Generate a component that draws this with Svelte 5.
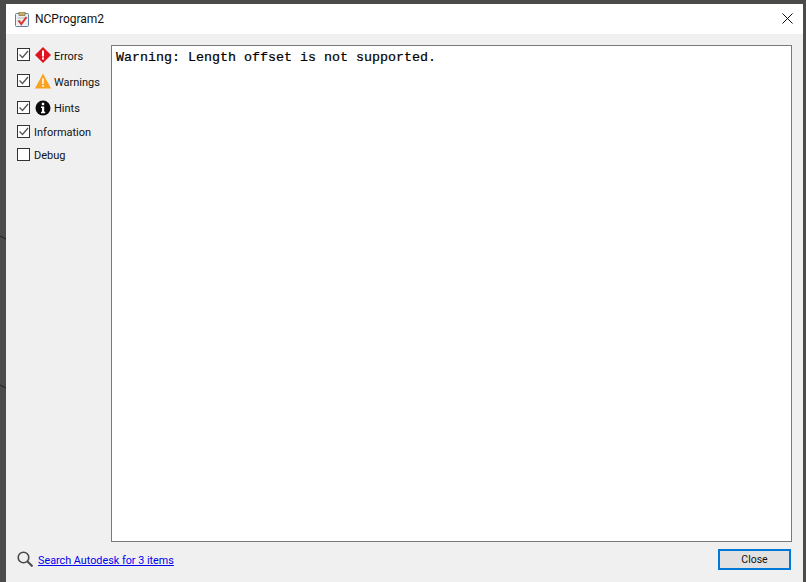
<script>
  const filters = [
    { label: 'Errors', icon: 'error', on: true, gap: 13 },
    { label: 'Warnings', icon: 'warn', on: true, gap: 14 },
    { label: 'Hints', icon: 'hint', on: true, gap: 11 },
    { label: 'Information', icon: null, on: true, gap: 10 },
    { label: 'Debug', icon: null, on: false, gap: 0 }
  ];
</script>

<div class="desk">
  <svg class="cracks" width="6" height="582" viewBox="0 0 6 582">
    <path d="M0 236l6 3M0 385l6 3" stroke="#222" stroke-width="1" fill="none"/>
  </svg>
  <div class="win">
    <header class="title">
      <svg class="appicon" width="14" height="15" viewBox="0 0 14 15">
        <rect x="0.500" y="1.500" width="13" height="13" rx="1" fill="#eef0f2" stroke="#5f7ea6"/>
        <rect x="4" y="0" width="6" height="3.500" fill="#c9ad6e" stroke="#80703f" stroke-width="0.700"/>
        <path d="M2.500 6h9M2.500 9h4" stroke="#b4b8c4" stroke-width="1"/>
        <path d="M3.500 8.500l2.800 3.500L11.500 5" fill="none" stroke="#d8382a" stroke-width="2"/>
      </svg>
      <span class="name">NCProgram2</span>
      <svg class="x" width="11" height="11" viewBox="0 0 11 11"><path d="M.5.5l10 10M10.500.5l-10 10" stroke="#111" stroke-width="1"/></svg>
    </header>
    <div class="main">
      <aside class="side">
        {#each filters as f}
          <div class="row" style="margin-bottom:{f.gap}px">
            <span class="box">
              {#if f.on}
                <svg width="11" height="11" viewBox="0 0 11 11"><path d="M1.500 5.500l3 3 5.500-6.500" fill="none" stroke="#555" stroke-width="1.300"/></svg>
              {/if}
            </span>
            {#if f.icon === 'error'}
              <svg class="ic" width="16" height="16" viewBox="0 0 16 16">
                <path d="M8 0l8 8-8 8-8-8z" fill="#e0141e"/>
                <rect x="7" y="3.500" width="2" height="6" fill="#fff"/>
                <rect x="7" y="10.500" width="2" height="2" fill="#fff"/>
              </svg>
            {:else if f.icon === 'warn'}
              <svg class="ic" width="16" height="16" viewBox="0 0 16 16">
                <path d="M8 .5L16 15.500H0z" fill="#f8a21f"/>
                <rect x="7.200" y="5.500" width="1.600" height="5.500" fill="#fff"/>
                <rect x="7.200" y="12" width="1.600" height="1.800" fill="#fff"/>
              </svg>
            {:else if f.icon === 'hint'}
              <svg class="ic" width="16" height="16" viewBox="0 0 16 16">
                <circle cx="8" cy="8" r="7.500" fill="#0a0a0a"/>
                <rect x="6.800" y="2.800" width="2.400" height="2.400" fill="#fff"/>
                <path d="M6 6.500h3.200v5.300h1v1.400H6v-1.400h1V8H6z" fill="#fff"/>
              </svg>
            {/if}
            <span class="lab">{f.label}</span>
          </div>
        {/each}
      </aside>
      <div class="log">Warning: Length offset is not supported.</div>
    </div>
    <footer class="foot">
      <svg width="16" height="16" viewBox="0 0 16 16">
        <circle cx="6.500" cy="6.500" r="5.300" fill="none" stroke="#4a4a4a" stroke-width="1.600"/>
        <path d="M10.500 10.500l5 5" stroke="#4a4a4a" stroke-width="2"/>
      </svg>
      <a class="link" href="#search">Search Autodesk for 3 items</a>
      <button class="close">Close</button>
    </footer>
  </div>
</div>

<style>
  :global(body) { margin: 0; }
  .desk {
    position: relative;
    width: 806px; height: 582px; box-sizing: border-box;
    background: #4b4b49; padding: 4px 3px 0 6px; overflow: hidden;
  }
  .cracks { position: absolute; left: 0; top: 0; }
  .win {
    height: 578px; background: #f0f0f0; display: flex; flex-direction: column;
    font-family: Roboto, "Open Sans", sans-serif; font-size: 11px; color: #111;
  }
  .title {
    height: 30px; flex: none; background: #fff; display: flex; align-items: center;
    padding: 0 10px 0 9px; box-sizing: border-box;
  }
  .appicon { margin-right: 6px; }
  .name { font-size: 12px; flex: 1; }
  .x { margin-bottom: 2px; }
  .main { display: flex; height: 508px; flex: none; box-sizing: border-box; padding: 11px 11px 0 11px; }
  .side { width: 94px; flex: none; padding-top: 3px; }
  .row { display: flex; align-items: center; height: 13px; }
  .lab { margin-top: 2px; }
  .row:nth-child(-n+2) .lab { margin-top: 4px; }
  .box {
    width: 11px; height: 11px; border: 1px solid #333; background: #fff;
    display: flex; margin-right: 4px; flex: none;
  }
  .ic { margin-right: 3px; margin-left: 1px; }
  .log {
    flex: 1; background: #fff; border: 1px solid #7a7a7a;
    font-family: "Liberation Mono", monospace; font-size: 13.330px;
    padding: 4px 4px; -webkit-text-stroke: 0.2px #000; color: #000;
  }
  .foot {
    flex: 1; display: flex; align-items: flex-start; padding: 7px 12px 0 11px; min-height: 0;
  }
  .foot svg { margin-top: 2px; }
  .link { color: #0000ee; text-decoration: underline; margin-left: 5px; flex: 1; margin-top: 5px; font-size: 10.800px; }
  .close {
    width: 73px; height: 21px; box-sizing: border-box; border: 2px solid #0078d7;
    background: #e1e1e1; font: inherit; font-size: 10.500px; color: #111; padding: 0;
  }
</style>
